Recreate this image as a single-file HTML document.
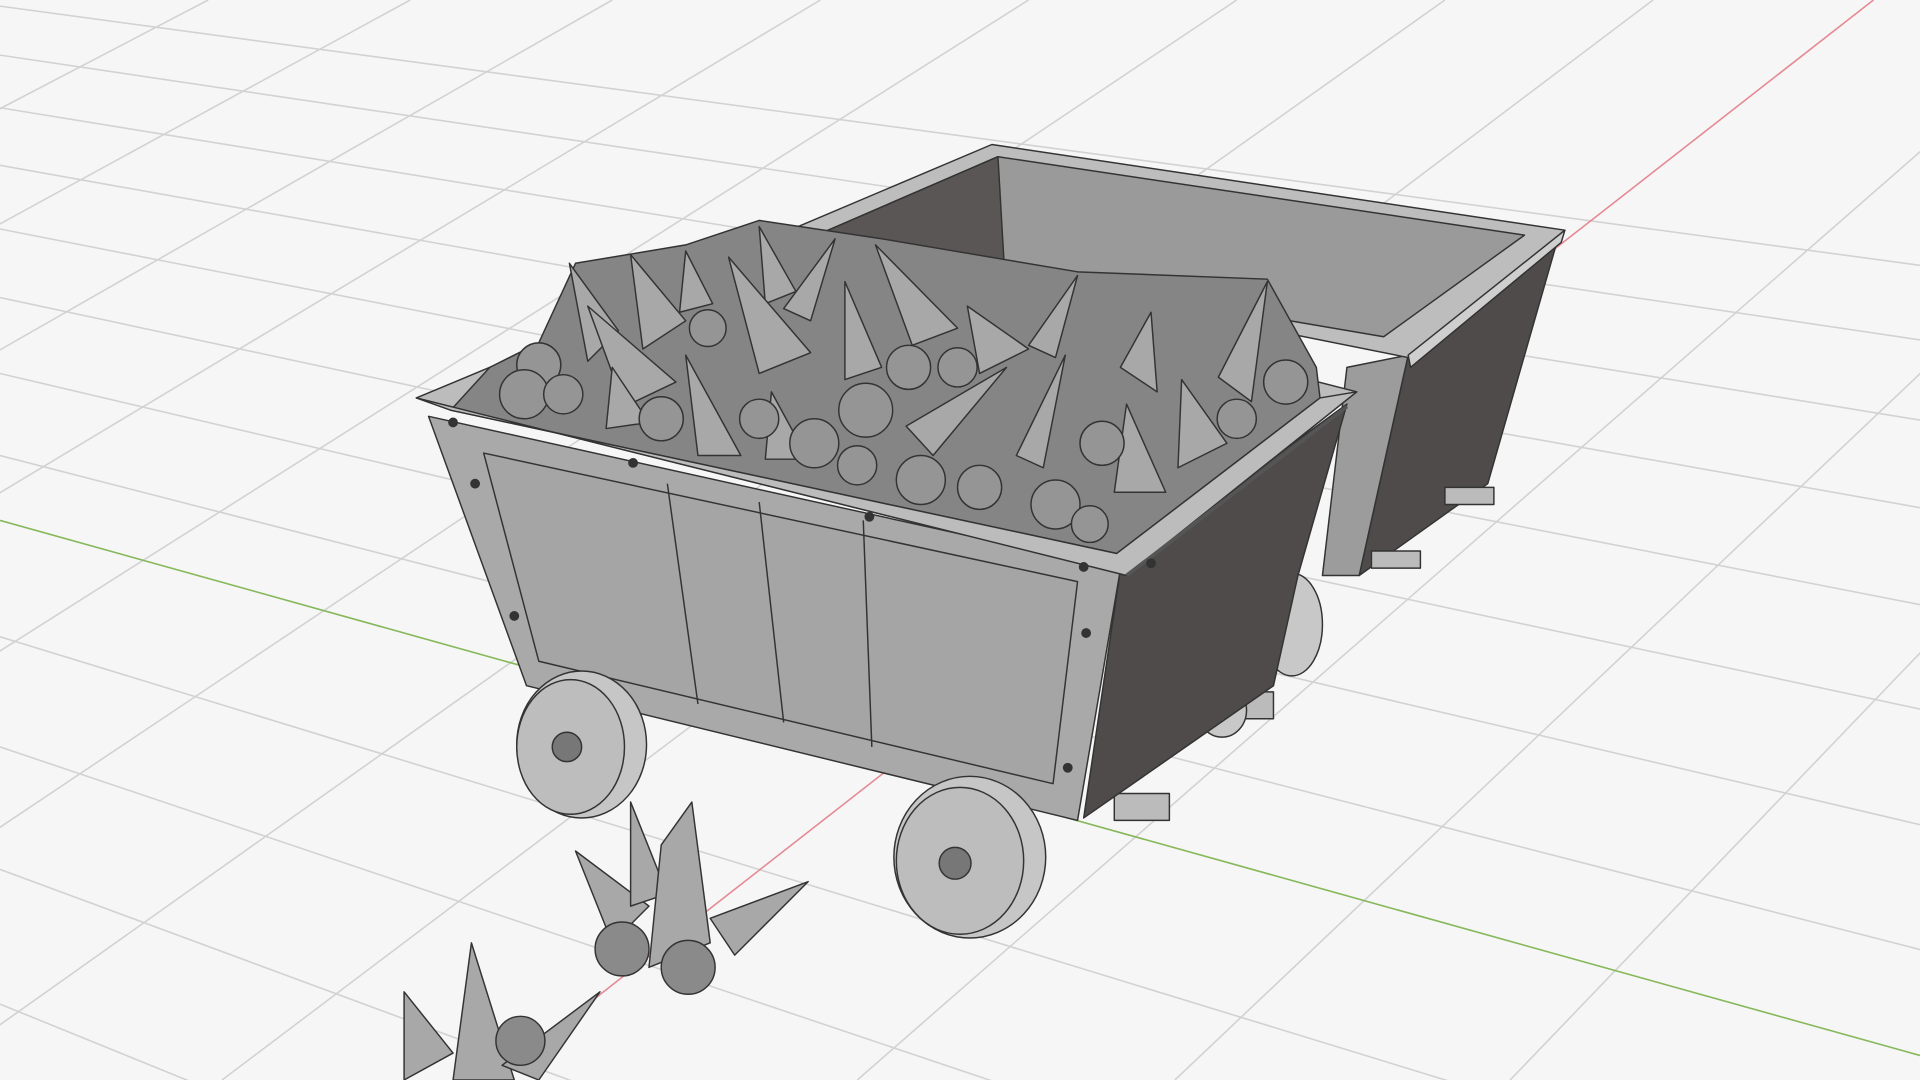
<!DOCTYPE html>
<html><head><meta charset="utf-8"><style>
html,body{margin:0;padding:0;background:#f6f6f6;overflow:hidden;width:1920px;height:1080px}
svg{display:block}
</style></head><body>
<svg id="s" width="1920" height="1080" viewBox="0 0 1568 882" preserveAspectRatio="none" xmlns="http://www.w3.org/2000/svg">
<rect width="1568" height="882" fill="#f6f6f6"/>
<g id="grid" stroke="#d2d2d2" stroke-width="1.3"></g>
<line x1="1530" y1="0" x2="480" y2="820" stroke="#e58a92" stroke-width="1.3"/>
<line x1="0" y1="425" x2="1568" y2="862" stroke="#86b85a" stroke-width="1.3"/>

<g stroke="#333" stroke-width="1.2" stroke-linejoin="round">
<polygon points="1150,290 1272,196 1215,395 1110,470" fill="#4f4b4b"/>
<polygon points="1100,300 1150,290 1110,470 1080,470" fill="#9c9c9c"/>
<polygon points="640,190 810,118 1278,188 1150,292" fill="#bdbdbd"/>
<polygon points="660,195 815,128 1245,192 1130,275" fill="#9a9a9a"/>
<polygon points="660,195 815,128 820,215 700,250" fill="#5a5656"/>
<polygon points="1150,290 1278,188 1275,198 1152,300" fill="#cfcfcf"/>
<rect x="1120" y="450" width="40" height="14" fill="#bbb"/>
<rect x="1180" y="398" width="40" height="14" fill="#bbb"/>
<ellipse cx="1055" cy="510" rx="25" ry="42" fill="#c8c8c8"/>
</g>

<g stroke="#333" stroke-width="1.2" stroke-linejoin="round">
<rect x="910" y="648" width="45" height="22" fill="#bbb"/>
<rect x="995" y="565" width="45" height="22" fill="#bbb"/>
<ellipse cx="998" cy="580" rx="20" ry="22" fill="#c8c8c8"/>
<polygon points="340,325 640,200 1108,320 920,470" fill="#bcbcbc"/>
<polygon points="368,335 400,300 440,280 470,215 560,200 620,180 720,195 880,222 1035,228 1075,300 1078,325 912,452" fill="#858585"/>
<g fill="#a8a8a8">
<polygon points="465,215 505,270 480,295"/><polygon points="515,208 560,262 525,285"/>
<polygon points="560,205 582,248 555,255"/><polygon points="620,185 650,238 625,248"/>
<polygon points="595,210 662,288 620,305"/><polygon points="682,195 662,262 640,252"/>
<polygon points="715,200 782,268 745,282"/><polygon points="880,225 862,292 840,282"/>
<polygon points="1035,230 1022,328 995,308"/><polygon points="822,300 762,372 740,348"/>
<polygon points="560,290 605,372 570,372"/><polygon points="920,330 952,402 910,402"/>
<polygon points="870,290 852,382 830,372"/><polygon points="480,250 552,312 510,332"/>
<polygon points="965,310 1002,362 962,382"/><polygon points="940,255 945,320 915,300"/>
<polygon points="790,250 840,285 800,305"/><polygon points="690,230 720,300 690,310"/>
<polygon points="630,320 660,375 625,375"/><polygon points="500,300 530,345 495,350"/>
</g>
<g fill="#959595">
<circle cx="440" cy="298" r="18"/><circle cx="428" cy="322" r="20"/><circle cx="540" cy="342" r="18"/>
<circle cx="665" cy="362" r="20"/><circle cx="707" cy="335" r="22"/><circle cx="752" cy="392" r="20"/>
<circle cx="800" cy="398" r="18"/><circle cx="862" cy="412" r="20"/><circle cx="578" cy="268" r="15"/>
<circle cx="742" cy="300" r="18"/><circle cx="900" cy="362" r="18"/><circle cx="1050" cy="312" r="18"/>
<circle cx="620" cy="342" r="16"/><circle cx="782" cy="300" r="16"/><circle cx="1010" cy="342" r="16"/>
<circle cx="890" cy="428" r="15"/><circle cx="460" cy="322" r="16"/><circle cx="700" cy="380" r="16"/>
</g>
<polygon points="915,465 1100,330 1060,470 1040,560 885,668" fill="#4f4b4b"/>
<polygon points="350,340 915,465 880,670 430,560" fill="#a9a9a9"/>
<polygon points="395,370 880,475 860,640 440,540" fill="#a5a5a5"/>
<line x1="545" y1="395" x2="570" y2="575"/><line x1="620" y1="410" x2="640" y2="590"/>
<line x1="705" y1="425" x2="712" y2="610"/>
<polygon points="340,325 920,470 1108,320 1078,325 912,452 368,335" fill="#bcbcbc"/>
<line x1="920" y1="470" x2="1100" y2="332" stroke-width="3" stroke="#555"/>
<ellipse cx="475" cy="608" rx="53" ry="60" fill="#c6c6c6"/>
<ellipse cx="466" cy="610" rx="44" ry="55" fill="#bdbdbd"/>
<circle cx="463" cy="610" r="12" fill="#777"/>
<ellipse cx="792" cy="700" rx="62" ry="66" fill="#c6c6c6"/>
<ellipse cx="784" cy="703" rx="52" ry="60" fill="#bdbdbd"/>
<circle cx="780" cy="705" r="13" fill="#777"/>
</g>
<g fill="#333">
<circle cx="370" cy="345" r="4"/><circle cx="517" cy="378" r="4"/><circle cx="710" cy="422" r="4"/>
<circle cx="885" cy="463" r="4"/><circle cx="887" cy="517" r="4"/><circle cx="872" cy="627" r="4"/>
<circle cx="388" cy="395" r="4"/><circle cx="420" cy="503" r="4"/><circle cx="940" cy="460" r="4"/>
</g>

<g stroke="#333" stroke-width="1.2" fill="#a8a8a8" stroke-linejoin="round">
<polygon points="470,695 530,740 500,770"/><polygon points="515,655 545,730 515,740"/>
<polygon points="565,655 580,770 530,790 540,690"/><polygon points="660,720 600,780 580,750"/>
<circle cx="508" cy="775" r="22" fill="#8a8a8a"/><circle cx="562" cy="790" r="22" fill="#8a8a8a"/>
<polygon points="330,810 370,860 330,882"/><polygon points="385,770 420,882 370,882"/>
<polygon points="490,810 440,882 410,870"/><circle cx="425" cy="850" r="20" fill="#8a8a8a"/>
</g>
</svg>
<script>
var g=document.getElementById('grid'),ns='http://www.w3.org/2000/svg';
function L(x1,y1,x2,y2){var l=document.createElementNS(ns,'line');l.setAttribute('x1',x1);l.setAttribute('y1',y1);l.setAttribute('x2',x2);l.setAttribute('y2',y2);g.appendChild(l);}
var va=[-3000,-400];
[5,45,88,135,187,243,305,372,520,610,710,820].forEach(function(y0){var s=(y0-va[1])/(0-va[0]);L(0,y0,1568,y0+s*1568);});
var vb=[4000,-2000];
[-500,-330,-170,0,170,335,500,670,840,1010,1180,1350,1710,1890,2080].forEach(function(x0){var dx=x0-vb[0],dy=0-vb[1];var t=882/dy;L(x0,0,x0+dx*t,882);});
</script>
</body></html>
